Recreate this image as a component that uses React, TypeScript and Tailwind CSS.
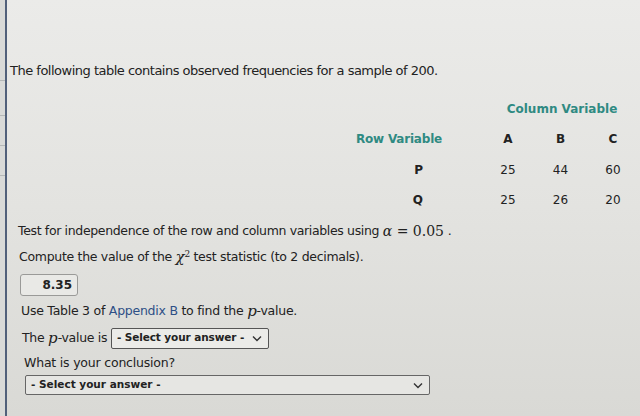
import React from "react";

const Chevron = () => (
  <svg width="10" height="7" viewBox="0 0 10 7" className="shrink-0">
    <path d="M1 1.5 L5 5.5 L9 1.5" fill="none" stroke="#333" strokeWidth="1.4" />
  </svg>
);

const serif = { fontFamily: '"DejaVu Serif", "Liberation Serif", serif' };

export default function App() {
  const font = { fontFamily: '"DejaVu Sans", Verdana, sans-serif' };
  return (
    <div
      className="w-[640px] h-[416px] flex overflow-hidden bg-gradient-to-b from-[#ebebe9] via-[#e3e3e0] to-[#d9d9d5] text-[#222]"
      style={font}
    >
      <div className="w-[7px] shrink-0 border-r-2 border-[#51607a] bg-[#d9dad8] flex flex-col">
        <div className="h-[80px]" />
        <div className="h-[35px] border-t border-[#b5b8b8]" />
        <div className="h-[30px] border-t border-[#b5b8b8]" />
        <div className="h-[30px] border-t border-[#b5b8b8]" />
        <div className="h-[30px] border-t border-[#b5b8b8]" />
      </div>
      <div className="flex-1 flex flex-col">
        <div className="h-[60px]" />
        <div className="h-[22px] pl-[3px] text-[13px] leading-[22px] tracking-[-0.5px]">
          The following table contains observed frequencies for a sample of 200.
        </div>
        <div className="h-[12px]" />
        <div className="grid grid-cols-[475px_52px_53px_52px] text-[12px]">
          <div className="h-[30px]" />
          <div className="col-span-3 h-[30px] flex items-center justify-center font-bold text-[#2f8a82] text-[12px] pl-[3px]">
            Column Variable
          </div>

          <div className="h-[30px] flex items-center justify-end pr-[40px] font-bold text-[#2f8a82] text-[12px] tracking-[-0.2px]">
            Row Variable
          </div>
          <div className="h-[30px] flex items-center justify-center font-bold">A</div>
          <div className="h-[30px] flex items-center justify-center font-bold">B</div>
          <div className="h-[30px] flex items-center justify-center font-bold">C</div>

          <div className="h-[31px] flex items-center justify-end pr-[59px] font-bold">P</div>
          <div className="h-[31px] flex items-center justify-center">25</div>
          <div className="h-[31px] flex items-center justify-center">44</div>
          <div className="h-[31px] flex items-center justify-center">60</div>

          <div className="h-[33px] pb-[3px] flex items-center justify-end pr-[59px] font-bold">Q</div>
          <div className="h-[33px] pb-[3px] flex items-center justify-center">25</div>
          <div className="h-[33px] pb-[3px] flex items-center justify-center">26</div>
          <div className="h-[33px] pb-[3px] flex items-center justify-center">20</div>
        </div>
        <div className="h-[26px] pl-[11px] text-[12.5px] leading-[26px] flex items-center tracking-[-0.35px]">
          <span>Test for independence of the row and column variables using&nbsp;</span>
          <span className="text-[14px] tracking-normal" style={serif}>
            <i>α</i> = 0.05
          </span>
          <span>&nbsp;.</span>
        </div>
        <div className="h-[26px] pl-[12px] text-[12.5px] flex items-center tracking-[-0.3px]">
          <span>Compute the value of the&nbsp;</span>
          <span className="text-[15px]" style={serif}>
            <i>χ</i>
            <sup className="text-[9px]">2</sup>
          </span>
          <span>&nbsp;test statistic (to 2 decimals).</span>
        </div>
        <div className="h-[4px]" />
        <div className="pl-[13px]">
          <div className="w-[58px] h-[22px] border border-[#9a9a98] rounded-[3px] bg-[#e9e9e6] flex items-center justify-end pr-[5px] text-[12px] font-bold">
            8.35
          </div>
        </div>
        <div className="h-[29px] pl-[14px] pt-[2px] text-[12.5px] flex items-center tracking-[-0.25px]">
          <span>Use Table 3 of&nbsp;</span>
          <span className="text-[#2d4f86]">Appendix B</span>
          <span>&nbsp;to find the&nbsp;</span>
          <i className="text-[15px]" style={serif}>
            p
          </i>
          <span>-value.</span>
        </div>
        <div className="h-[26px] pl-[15px] text-[12.5px] flex items-center">
          <span className="tracking-[-0.3px]">The&nbsp;</span>
          <i className="text-[15px]" style={serif}>
            p
          </i>
          <span className="tracking-[-0.3px]">-value is&nbsp;</span>
          <div className="w-[158px] h-[21px] border border-[#555] rounded-[2px] bg-[#ebebe8] flex items-center justify-between pl-[5px] pr-[6px]">
            <span className="text-[10.5px] font-bold tracking-[-0.1px]">- Select your answer -</span>
            <Chevron />
          </div>
        </div>
        <div className="h-[24px] pl-[17px] text-[12.5px] flex items-center tracking-[-0.2px]">
          What is your conclusion?
        </div>
        <div className="pl-[18px]">
          <div className="w-[405px] h-[20px] border border-[#666] rounded-[2px] bg-[#e6e6e3] flex items-center justify-between pl-[5px] pr-[6px]">
            <span className="text-[10.5px] font-bold">- Select your answer -</span>
            <Chevron />
          </div>
        </div>
      </div>
    </div>
  );
}
